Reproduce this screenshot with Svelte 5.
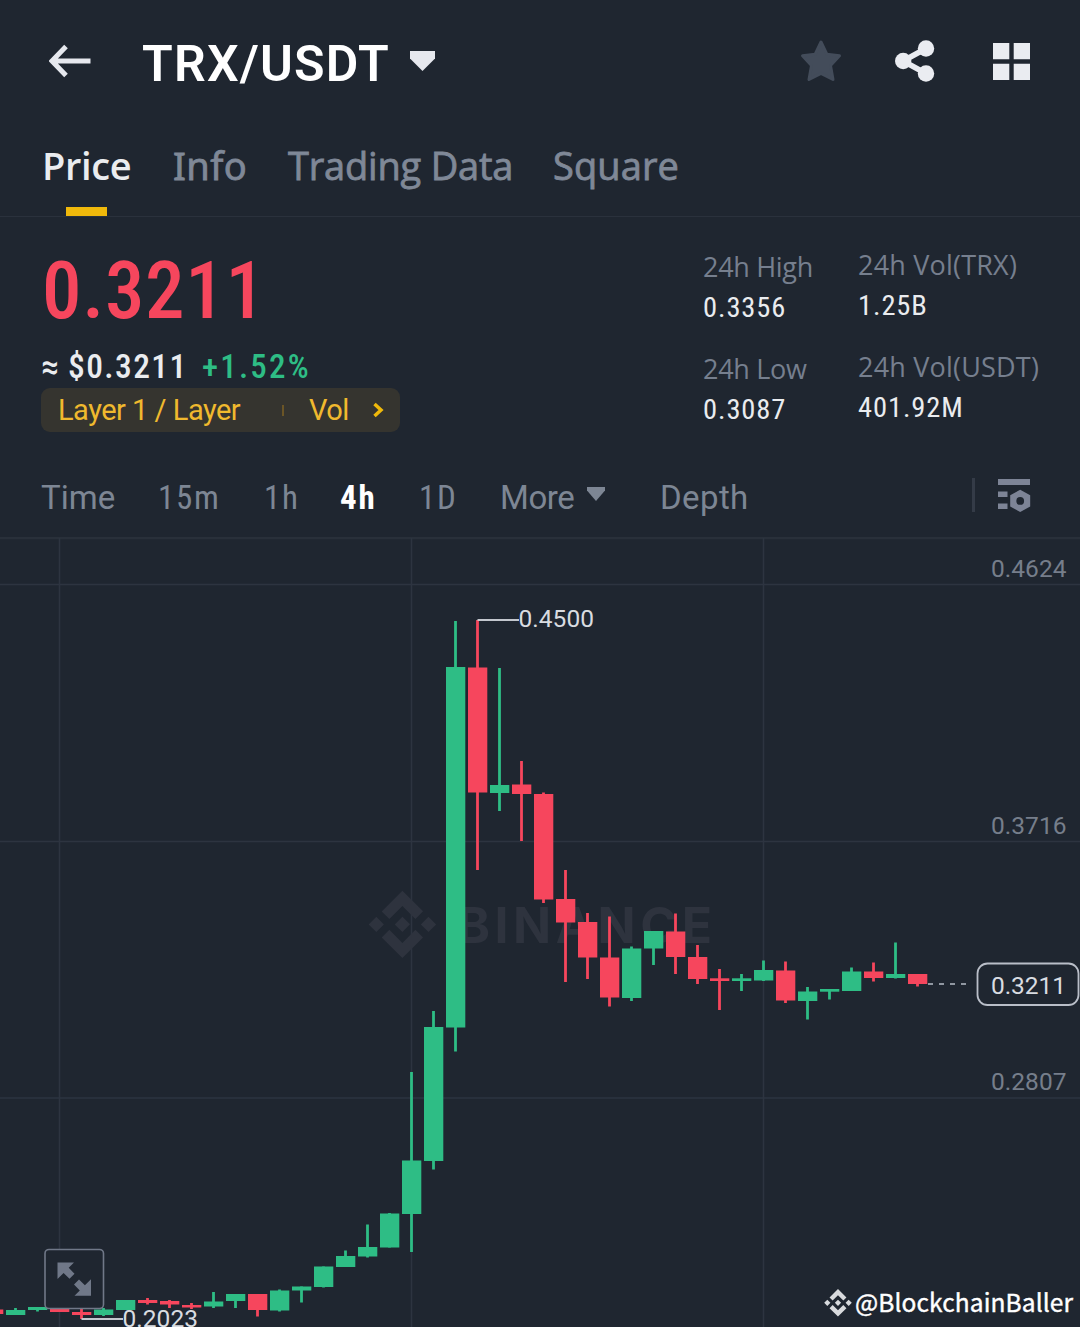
<script>
  const tabs = [
    { label: 'Price', cls: 'price' },
    { label: 'Info', cls: 'info' },
    { label: 'Trading Data', cls: 'trading' },
    { label: 'Square', cls: 'square' }
  ];

  // [high, body top, body bottom, low, direction], one candle every 22px
  const candles = [
    [1309.5, 1309.5, 1314, 1314, 'd'], [1308, 1310, 1315, 1315, 'u'], [1307, 1307, 1310, 1311.5, 'u'],
    [1309, 1309, 1312, 1312, 'd'], [1308, 1312, 1315, 1319, 'd'], [1308, 1309.5, 1315, 1316, 'u'],
    [1300, 1300, 1310, 1310, 'u'], [1298, 1300, 1303, 1304.5, 'd'], [1300, 1301, 1304.5, 1308, 'd'],
    [1303, 1305, 1307.5, 1309, 'd'], [1292, 1301.5, 1306.5, 1308, 'u'], [1294, 1294, 1301, 1308, 'u'],
    [1294, 1294, 1310, 1316.5, 'd'], [1289.5, 1290.5, 1310.5, 1311.5, 'u'], [1286.5, 1286.5, 1290.5, 1302.5, 'u'],
    [1266.5, 1266.5, 1287, 1287.5, 'u'], [1250.5, 1256, 1267, 1267, 'u'], [1224.5, 1247, 1256.5, 1257.5, 'u'],
    [1213, 1213.5, 1247.5, 1247.5, 'u'], [1072, 1160.5, 1214, 1252, 'u'], [1011, 1027, 1161, 1169.5, 'u'],
    [621, 667, 1027.5, 1051.5, 'u'], [620, 667.5, 792.5, 870, 'd'], [668, 785, 793, 811, 'u'],
    [761, 784.5, 794, 841, 'd'], [792.5, 794, 899.5, 903, 'd'], [870, 899, 922.5, 982, 'd'],
    [913, 922, 957.5, 979, 'd'], [916.5, 957.5, 997.5, 1006.5, 'd'], [946.5, 948.5, 998, 1001, 'u'],
    [931, 931, 948.5, 965, 'u'], [913.5, 931.5, 957, 974, 'd'], [945, 957, 979, 984, 'd'],
    [969, 978.3, 981, 1010, 'd'], [974, 978.3, 981, 991, 'u'], [960.5, 970, 980.5, 981, 'u'],
    [961.5, 970.5, 1000.5, 1003, 'd'], [987, 991.5, 1001, 1019.5, 'u'], [989, 989, 991.7, 999.5, 'u'],
    [967.5, 971.5, 991, 991, 'u'], [962.5, 971.5, 978, 981.5, 'd'], [942.5, 974, 978, 978.5, 'u'],
    [974, 974, 984, 986.5, 'd']
  ].map(([high, top, bottom, low, dir], i) => ({ high, top, bottom, low, dir, x: 455.5 + (i - 21) * 22 }));

  const logo =
    'M16.624 13.9202l2.7175 2.7154-7.353 7.353-7.353-7.352 2.7175-2.7164 4.6355 4.6595 4.6356-4.6595zm4.6366-4.6366L24 12l-2.7154 2.7164L18.5682 12l2.6924-2.7164zm-9.272.001l2.7163 2.6914-2.7164 2.7174v-.001L9.2721 12l2.7164-2.7154zm-9.2722-.001L5.4088 12l-2.6914 2.6924L0 12l2.7164-2.7164zM11.9885.0115l7.353 7.329-2.7174 2.7154-4.6356-4.6356-4.6355 4.6595-2.7174-2.7154 7.353-7.353z';
</script>

<main>
  <header>
    <svg class="back" viewBox="0 0 42 34"><path d="M17 2.5 3 17l14 14.500M3 17h38.500" /></svg>
    <h1>TRX/USDT</h1>
    <svg class="caret" viewBox="0 0 25 20"><path d="M0 0h25v7.500L12.500 20 0 7.500z" /></svg>
    <nav class="actions">
      <svg class="star" viewBox="0 0 42 42"><path d="M21 2l5.800 12.200L39.500 15.800 30.500 25.500 33 39.500 21 33.300 9 39.500 11.500 25.500 2.500 15.800 15.200 14.200z" /></svg>
      <svg class="share" viewBox="0 0 40 42"><path d="M31 8.500 8 21l23 12.500" /><circle cx="31" cy="8.500" r="8.200" /><circle cx="8.200" cy="21" r="8.200" /><circle cx="31" cy="33.500" r="8.200" /></svg>
      <svg class="apps" viewBox="0 0 37 37"><path d="M0 0h16.300v16.300H0zM20.700 0H37v16.300H20.700zM0 20.700h16.300V37H0zM20.700 20.700H37V37H20.700z" /></svg>
    </nav>
  </header>

  <nav class="tabs">
    {#each tabs as tab, i}
      <span class="tab {tab.cls}" class:active={i === 0}>{tab.label}</span>
    {/each}
  </nav>

  <section class="summary">
    <div class="quote">
      <div class="last">0.3211</div>
      <div class="sub"><span class="approx">≈</span><span class="fiat">$0.3211</span><span class="change">+1.52%</span></div>
      <div class="pill">
        <span class="layer">Layer 1 / Layer</span>
        <i></i>
        <span class="vol">Vol</span>
        <svg viewBox="0 0 12 16"><path d="M2.500 2 9 8l-6.500 6" /></svg>
      </div>
    </div>
    <div class="stats">
      <span class="k">24h High</span><span class="v">0.3356</span>
      <span class="k">24h Low</span><span class="v">0.3087</span>
    </div>
    <div class="stats volumes">
      <span class="k">24h Vol(TRX)</span><span class="v">1.25B</span>
      <span class="k">24h Vol(USDT)</span><span class="v">401.92M</span>
    </div>
  </section>

  <nav class="intervals">
    <span class="w-time">Time</span>
    <span class="w-15m narrow">15m</span>
    <span class="w-1h narrow">1h</span>
    <span class="w-4h narrow current">4h</span>
    <span class="w-1d narrow">1D</span>
    <span class="w-more">More</span>
    <svg class="mini" viewBox="0 0 18 14"><path d="M0 0h18v3.500L9 14 0 3.500z" /></svg>
    <span class="w-depth">Depth</span>
    <svg class="settings" viewBox="0 0 60 36">
      <path class="sep" d="M2.500 1v34" />
      <path d="M27 2h32v6H27zM27 14.500h9.500v5.500H27zM27 26.500h9.500V32H27z" />
      <path fill-rule="evenodd" d="M49.200 12.700l10 5.600v11.200l-10 5.500-10-5.500V18.300zM49.200 20a3.900 3.900 0 1 0 0 7.800 3.900 3.900 0 0 0 0-7.800z" />
    </svg>
  </nav>

  <svg class="chart" viewBox="0 537 1080 790">
    <path class="grid top" d="M0 538H1080" />
    <path class="grid" d="M0 584.500H1080M0 841.500H1080M0 1098H1080M59.500 538V1327M411.500 538V1327M763.500 538V1327" />

    <g class="brand">
      <path transform="translate(368.700 890.700) scale(2.810)" d={logo} />
      <text x="457" y="942.500" textLength="255">BINANCE</text>
    </g>

    {#each candles as c}
      <g class={c.dir}>
        <rect x={c.x - 1.4} y={c.high} width="2.800" height={c.low - c.high} />
        <rect x={c.x - 9.5} y={c.top} width="19.300" height={c.bottom - c.top} />
      </g>
    {/each}

    <path class="leader" d="M477.500 620H519M81.500 1319H123" />
    <text class="mark" x="518.500" y="626.700" textLength="75.500">0.4500</text>
    <text class="mark" x="122.500" y="1326.700" textLength="75.500">0.2023</text>

    <text class="axis" x="991" y="576.500" textLength="75.500">0.4624</text>
    <text class="axis" x="991" y="833.500" textLength="75.500">0.3716</text>
    <text class="axis" x="991" y="1089.500" textLength="75.500">0.2807</text>

    <path class="dash" d="M928 984H967" />
    <rect class="badge" x="977.500" y="963.500" width="101" height="41.500" rx="10" />
    <text class="mark" x="991" y="993.700" textLength="75">0.3211</text>

    <rect class="expand" x="45" y="1249.500" width="58.500" height="59" rx="4" />
    <path class="arrows" d="M57.500 1262.500h16.500l-5.300 5.300 5.800 5.900-5 5-5.900-5.800-6.100 6.100zM91 1295.700H74.500l5.300-5.300-5.800-5.900 5-5 5.900 5.800 6.100-6.100z" />

    <g class="handle">
      <path transform="translate(824.200 1289) scale(1.150)" d={logo} />
      <text x="855" y="1312" textLength="218">@BlockchainBaller</text>
    </g>
  </svg>
</main>

<style>
  :global(body) { background: #1f2630; }
  main {
    width: 1080px;
    height: 1327px;
    overflow: hidden;
    display: flex;
    flex-direction: column;
    background: #1f2630;
    color: #eaecef;
    font-family: Roboto, sans-serif;
    white-space: nowrap;
  }
  svg { display: block; flex: none; }
  span { flex: none; }

  header { height: 124px; padding: 0 50px 2px 49px; display: flex; align-items: center; box-sizing: border-box; flex: none; }
  .back { width: 42px; height: 34px; fill: none; stroke: #e6e8ee; stroke-width: 5; }
  h1 { margin: 6px 0 0 51px; width: 247px; font-size: 50px; line-height: 60px; font-weight: 600; letter-spacing: 1.200px; color: #fff; }
  .caret { width: 25px; height: 20px; margin-left: 21px; margin-top: -1px; fill: #e6e8ee; }
  .actions { margin-left: auto; display: flex; align-items: center; }
  .star { width: 42px; height: 42px; fill: #434c5a; stroke: #434c5a; stroke-width: 3; stroke-linejoin: round; }
  .share { width: 40px; height: 42px; margin-left: 53px; fill: #eaecf1; }
  .share path { fill: none; stroke: #eaecf1; stroke-width: 5.500; }
  .apps { width: 37px; height: 37px; margin-left: 58px; fill: #eaecf1; }

  .tabs { height: 92px; flex: none; display: flex; padding-left: 42px; border-bottom: 1.500px solid #2a313c; }
  .tab { position: relative; font: 400 38px/83px 'Open Sans', sans-serif; letter-spacing: -0.200px; color: #7f8897; -webkit-text-stroke: 0.800px #7f8897; }
  .tab.info { font-family: 'Noto Sans', sans-serif; letter-spacing: 0.400px; }
  .price { width: 131px; }
  .info { width: 115px; }
  .trading { width: 265px; }
  .tab.square { letter-spacing: 0.100px; }
  .tab.active { color: #eaecef; font-weight: 600; letter-spacing: -0.400px; -webkit-text-stroke: 0; }
  .active::after { content: ''; position: absolute; left: 24px; top: 83px; width: 41px; height: 9px; background: #f0b90b; }

  .summary { height: 223px; flex: none; display: flex; }
  .quote { width: 662px; padding-left: 41px; }
  .last { margin-top: 29px; padding-left: 1px; height: 90px; font-size: 79px; line-height: 90px; font-weight: 500; font-stretch: 75%; letter-spacing: 0.700px; color: #f6465d; }
  .sub { height: 42px; margin-top: 10px; display: flex; align-items: center; line-height: 42px; font-weight: 500; font-stretch: 75%; }
  .approx { width: 27px; font-size: 36px; }
  .fiat { width: 134px; font-size: 33.500px; letter-spacing: 1.400px; }
  .change { font-size: 33px; letter-spacing: 2.200px; color: #2ebd85; }
  .pill { width: 359px; height: 44px; margin-top: 0; border-radius: 9px; background: #35342f; color: #f0b92e; display: flex; align-items: center; font-size: 29px; letter-spacing: -0.500px; box-sizing: border-box; padding-left: 17px; }
  .layer { width: 224px; }
  .pill i { width: 2px; height: 11px; background: #6b5526; }
  .vol { width: 63px; margin-left: 25px; }
  .pill svg { width: 12px; height: 16px; fill: none; stroke: #f0b90b; stroke-width: 3.500; }

  .stats { width: 155px; padding-top: 31px; display: flex; flex-direction: column; }
  .stats.volumes { padding-top: 29px; width: 200px; }
  .k { height: 40px; font: 400 27px/38px 'Open Sans', sans-serif; letter-spacing: -0.300px; color: #767f8e; }
  .volumes .k { letter-spacing: 0.200px; }
  .v { height: 62px; font-size: 28.500px; line-height: 39px; font-stretch: 75%; letter-spacing: 0.900px; }

  .intervals { height: 97px; flex: none; display: flex; align-items: center; padding-left: 41px; box-sizing: border-box; font-size: 33px; color: #7d8694; }
  .intervals span { line-height: 40px; margin-top: 19px; }
  .intervals .narrow { font-stretch: 75%; letter-spacing: 1.700px; }
  .w-time { width: 117px; } .w-15m { width: 106px; } .w-1h { width: 76px; } .w-4h { width: 79px; } .w-1d { width: 81px; } .w-more { width: 87px; letter-spacing: -0.400px; }
  .current { color: #fff; font-weight: 700; }
  .mini { width: 18px; height: 14px; margin-top: 10px; fill: #7d8694; }
  .w-depth { margin-left: 55px; width: 311px; letter-spacing: 0.400px; }
  .settings { width: 60px; height: 36px; margin-top: 13px; fill: #7d8496; }
  .sep { fill: none; stroke: #343b47; stroke-width: 3; }

  .chart { width: 1080px; height: 790px; }
  .grid { fill: none; stroke: #2d3440; stroke-width: 1.500; }
  .grid.top { stroke: #29303a; stroke-width: 2.500; }
  .brand { fill: #2e333e; }
  .brand text { font: 700 50px Inter, sans-serif; }
  .u { fill: #2ebd85; }
  .d { fill: #f6465d; }
  .leader { fill: none; stroke: #c3c7ce; stroke-width: 1.800; }
  .mark { fill: #d9dce1; font-size: 24.500px; }
  .axis { fill: #767e8b; font-size: 24.500px; }
  .dash { stroke: #b7bdc6; stroke-width: 1.500; stroke-dasharray: 5 6; }
  .badge { fill: #1f2630; stroke: #b9bec8; stroke-width: 1.800; }
  .expand { fill: #1f2630; stroke: #707888; stroke-width: 1.600; }
  .arrows { fill: #707888; }
  .handle { fill: #d8dadd; }
  .handle text { font: 400 24.500px 'Noto Sans CJK SC', sans-serif; fill: #fff; stroke: #fff; stroke-width: 0.400; }
</style>
